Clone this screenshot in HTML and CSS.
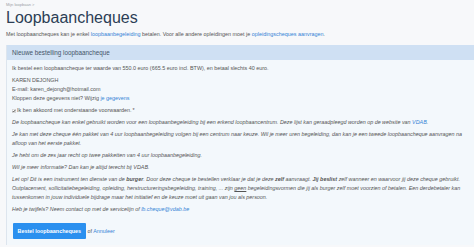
FILE: index.html
```html
<!DOCTYPE html>
<html lang="nl">
<head>
<meta charset="utf-8">
<title>Loopbaancheques</title>
<link rel="stylesheet" href="styles.css">
</head>
<body>
<div class="page">
  <div class="crumb">Mijn loopbaan &gt;</div>
  <h1 class="title">Loopbaancheques</h1>
  <p class="intro">Met loopbaancheques kan je enkel <a href="#">loopbaanbegeleiding</a> betalen. Voor alle andere opleidingen moet je <a href="#">opleidingscheques aanvragen</a>.</p>
  <div class="panel">
    <div class="panel-head">Nieuwe bestelling loopbaancheque</div>
    <div class="panel-body">
      <p class="p">Ik bestel een loopbaancheque ter waarde van 550.0 euro (665.5 euro incl. BTW), en betaal slechts 40 euro.</p>
      <p class="p">KAREN DEJONGH<br>E-mail: karen_dejongh@hotmail.com<br>Kloppen deze gegevens niet? Wijzig <a href="#">je gegevens</a></p>
      <label class="check"><span class="box"><svg viewBox="0 0 10 10" width="4" height="4"><rect x="0.5" y="0.5" width="9" height="9" rx="1" fill="#fff" stroke="#888"/><path d="M2 5.2 L4.2 7.4 L8.2 2.4" fill="none" stroke="#222" stroke-width="1.8"/></svg></span>Ik ben akkoord met onderstaande voorwaarden. <span class="req">*</span></label>
      <div class="terms">
        <p class="p">De loopbaancheque kan enkel gebruikt worden voor een loopbaanbegeleiding bij een erkend loopbaancentrum. Deze lijst kan geraadpleegd worden op de website van <a href="#">VDAB</a>.</p>
        <p class="p">Je kan met deze cheque één pakket van 4 uur loopbaanbegeleiding volgen bij een centrum naar keuze. Wil je meer uren begeleiding, dan kan je een tweede loopbaancheque aanvragen na afloop van het eerste pakket.</p>
        <p class="p">Je hebt om de zes jaar recht op twee pakketten van 4 uur loopbaanbegeleiding.</p>
        <p class="p">Wil je meer informatie? Dan kan je altijd terecht bij VDAB.</p>
        <p class="p">Let op! Dit is een instrument ten dienste van de <b>burger</b>. Door deze cheque te bestellen verklaar je dat je deze <b>zelf</b> aanvraagt. <b>Jij beslist</b> zelf wanneer en waarvoor jij deze cheque gebruikt. Outplacement, sollicitatiebegeleiding, opleiding, herstructureringsbegeleiding, training, ... zijn <u>geen</u> begeleidingsvormen die jij als burger zelf moet voorzien of betalen. Een derdebetaler kan tussenkomen in jouw individuele bijdrage maar het initiatief en de keuze moet uit gaan van jou als persoon.</p>
        <p class="p">Heb je twijfels? Neem contact op met de servicelijn of <a href="#">lb.cheque@vdab.be</a></p>
      </div>
      <div class="actions">
        <button class="btn" type="button">Bestel loopbaancheques</button>
        <span class="or">of <a href="#">Annuleer</a></span>
      </div>
    </div>
  </div>
</div>
</body>
</html>
```
FILE: styles.css
```css
html, body {
  margin: 0;
  padding: 0;
  background: #f7f8fa;
}
body {
  font-family: "Liberation Sans", Arial, sans-serif;
  color: #555;
  width: 474px;
  height: 247px;
  overflow: hidden;
}
a {
  color: #3583d6;
  text-decoration: none;
}
.page {
  padding: 1px 0 0 6px;
}
.crumb {
  font-size: 4px;
  line-height: 7px;
  color: #9aa0a6;
}
.title {
  margin: 0;
  font-size: 16px;
  font-weight: normal;
  line-height: 20px;
  color: #2c3e55;
}
.intro {
  margin: 2px 0 0;
  font-size: 5.4px;
  line-height: 8px;
}
.panel {
  margin-top: 7px;
  border-left: 1px solid #dde5ee;
  background: #f3f8fc;
  height: 200px;
}
.panel-head {
  background: #cfe0f3;
  height: 15px;
  line-height: 15px;
  padding-left: 5px;
  font-size: 6.3px;
  color: #445468;
}
.panel-body {
  padding: 4px 2px 0 5px;
  font-size: 5.4px;
  line-height: 9px;
}
.p {
  margin: 0 0 3px;
}
.check {
  display: flex;
  align-items: center;
  margin: 3px 0 3px;
}
.box {
  display: inline-flex;
  margin-right: 1px;
}
.req {
  margin-left: 1px;
}
.terms {
  font-style: italic;
}
.actions {
  display: flex;
  align-items: center;
  margin-top: 9px;
}
.btn {
  background: #2b90ef;
  color: #fff;
  border: none;
  border-radius: 1px;
  font-family: "Liberation Sans", Arial, sans-serif;
  font-weight: bold;
  font-size: 5.4px;
  height: 16px;
  padding: 0 4.5px;
  margin-left: 1px;
}
.or {
  margin-left: 2px;
}
```
